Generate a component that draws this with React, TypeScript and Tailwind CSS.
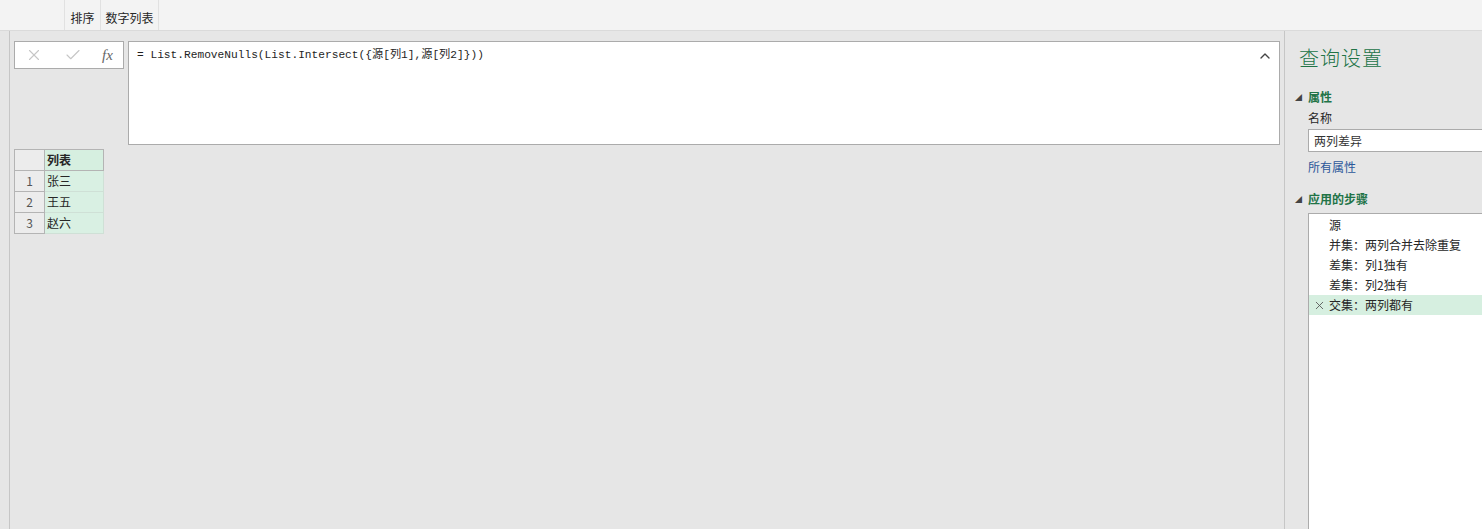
import { X, Check, ChevronUp } from 'lucide-react';

const cjk = '"Segoe UI", "Noto Sans CJK SC", sans-serif';

const formula = '= List.RemoveNulls(List.Intersect({源[列1],源[列2]}))';

const rows = ['张三', '王五', '赵六'];

const steps = [
  { name: '源' },
  { name: '并集：两列合并去除重复' },
  { name: '差集：列1独有' },
  { name: '差集：列2独有' },
  { name: '交集：两列都有', active: true },
];

function Ribbon() {
  return (
    <div className="flex h-[31px] bg-[#f3f3f3] border-b border-[#dadada] text-[12px] text-[#262626]">
      <div className="w-[65px] border-r border-[#e1e1e1]" />
      <div className="w-[36px] border-r border-[#e1e1e1] flex items-end justify-center pb-[3px]">排序</div>
      <div className="w-[58px] border-r border-[#e1e1e1] flex items-end justify-center pb-[3px]">数字列表</div>
    </div>
  );
}

function FormulaBar() {
  return (
    <div className="flex gap-[4px]">
      <div className="w-[110px] h-[28px] bg-white border border-[#ababab] flex items-center justify-around text-[#c6c6c6]">
        <X size={18} strokeWidth={1.5} />
        <Check size={18} strokeWidth={1.5} />
        <span className="italic text-[#666] text-[15px]" style={{ fontFamily: '"Liberation Serif", serif' }}>
          fx
        </span>
      </div>
      <div className="flex-1 h-[104px] bg-white border border-[#ababab] flex items-start justify-between pl-[8px] pr-[6px] pt-[5px]">
        <span className="text-[11.2px] text-[#1e1e1e]" style={{ fontFamily: '"Liberation Mono", "Noto Sans CJK SC", monospace' }}>
          {formula}
        </span>
        <ChevronUp size={16} strokeWidth={2} className="text-[#444] mt-[1px]" />
      </div>
    </div>
  );
}

function Grid() {
  return (
    <table className="border-collapse text-[12px] text-[#262626] mt-[4px]">
      <thead>
        <tr className="h-[21px]">
          <th className="w-[30px] bg-[#ececec] border border-[#b4b4b4]" />
          <th className="w-[59px] bg-[#d6efe0] border border-[#b4b4b4] text-left pl-[2px] font-bold">列表</th>
        </tr>
      </thead>
      <tbody>
        {rows.map((r, i) => (
          <tr key={i} className="h-[21px]">
            <td className="bg-[#ececec] border border-[#b4b4b4] text-center text-[#555]">{i + 1}</td>
            <td className="bg-[#d9f0e3] border border-[#cfe0d6] pl-[2px]">{r}</td>
          </tr>
        ))}
      </tbody>
    </table>
  );
}

function Settings() {
  return (
    <div className="w-[198px] border-l border-[#c6c6c6] bg-[#e6e6e6] flex flex-col pl-[14px] pt-[13px] text-[12px]" style={{ fontFamily: cjk }}>
      <div className="text-[20px] text-[#217346] font-light tracking-[1px] leading-[28px]">查询设置</div>
      <div className="flex items-center mt-[16px] -ml-[4px] text-[#217346] font-bold">
        <span className="text-[7px] text-[#444] w-[13px]">◢</span>
        <span>属性</span>
      </div>
      <div className="pl-[9px] mt-[3px] text-[#262626]">名称</div>
      <div className="ml-[9px] mt-[2px] h-[23px] bg-white border border-r-0 border-[#ababab] flex items-center pl-[5px] text-[#333]">两列差异</div>
      <div className="pl-[9px] mt-[6px] text-[#2b579a]">所有属性</div>
      <div className="flex items-center mt-[14px] -ml-[4px] text-[#217346] font-bold">
        <span className="text-[7px] text-[#444] w-[13px]">◢</span>
        <span>应用的步骤</span>
      </div>
      <div className="ml-[9px] mt-[5px] flex-1 bg-white border border-r-0 border-b-0 border-[#ababab] pt-[1px]">
        {steps.map((s, i) => (
          <div key={i} className={`h-[20px] flex items-center text-[#262626] ${s.active ? 'bg-[#d6efe0]' : ''}`}>
            <span className="w-[20px] flex justify-center text-[#555]">{s.active ? <X size={13} strokeWidth={1.6} /> : null}</span>
            <span>{s.name}</span>
          </div>
        ))}
      </div>
    </div>
  );
}

export default function App() {
  return (
    <div className="w-[1482px] h-[529px] flex flex-col bg-[#e6e6e6] overflow-hidden" style={{ fontFamily: cjk }}>
      <Ribbon />
      <div className="flex flex-1 min-h-0">
        <div className="w-[10px] border-r border-[#c6c6c6] bg-[#e6e6e6]" />
        <div className="flex-1 pl-[4px] pr-[4px] pt-[10px]">
          <FormulaBar />
          <Grid />
        </div>
        <Settings />
      </div>
    </div>
  );
}
